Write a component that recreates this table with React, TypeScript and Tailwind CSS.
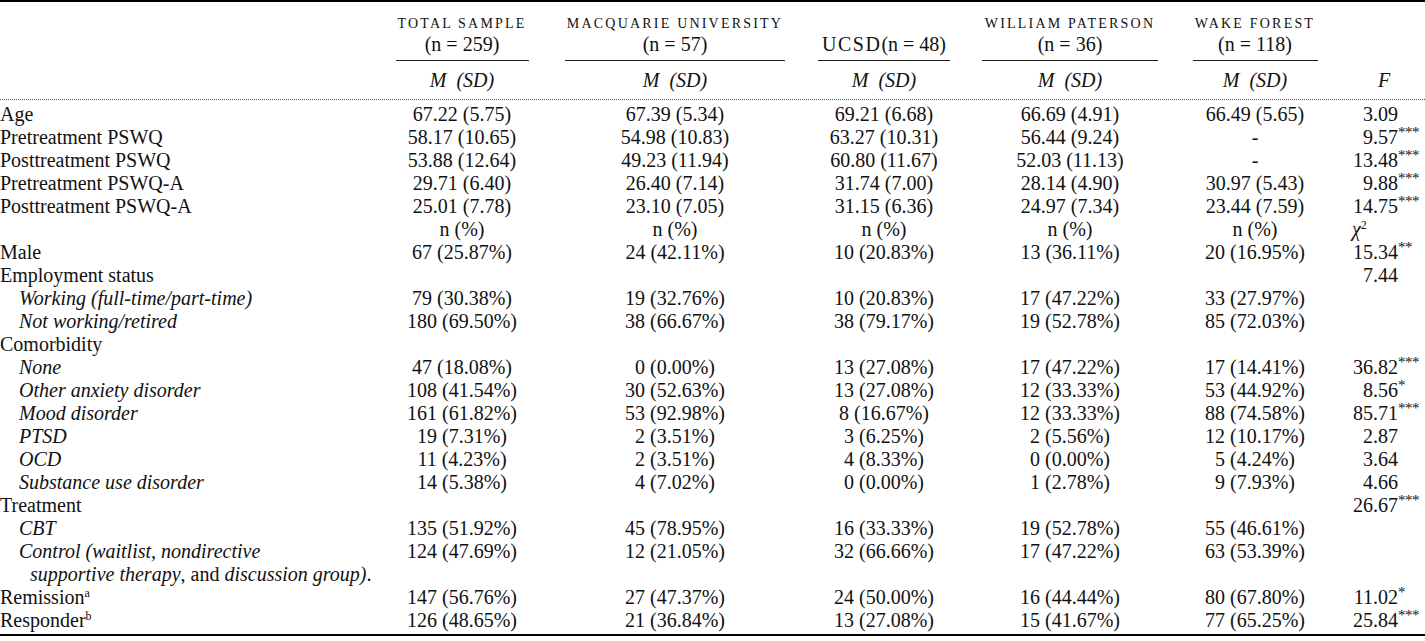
import React from 'react';

type Row = {
  label: React.ReactNode;
  indent?: 0 | 1 | 2;
  italic?: boolean;
  cells?: string[];
  f?: string;
  stars?: string;
  chi?: boolean;
};

const cols = 'grid grid-cols-[390px_144px_282px_136px_236px_134px_1fr]';

const rows: Row[] = [
  { label: 'Age', cells: ['67.22 (5.75)', '67.39 (5.34)', '69.21 (6.68)', '66.69 (4.91)', '66.49 (5.65)'], f: '3.09' },
  { label: 'Pretreatment PSWQ', cells: ['58.17 (10.65)', '54.98 (10.83)', '63.27 (10.31)', '56.44 (9.24)', '-'], f: '9.57', stars: '***' },
  { label: 'Posttreatment PSWQ', cells: ['53.88 (12.64)', '49.23 (11.94)', '60.80 (11.67)', '52.03 (11.13)', '-'], f: '13.48', stars: '***' },
  { label: 'Pretreatment PSWQ-A', cells: ['29.71 (6.40)', '26.40 (7.14)', '31.74 (7.00)', '28.14 (4.90)', '30.97 (5.43)'], f: '9.88', stars: '***' },
  { label: 'Posttreatment PSWQ-A', cells: ['25.01 (7.78)', '23.10 (7.05)', '31.15 (6.36)', '24.97 (7.34)', '23.44 (7.59)'], f: '14.75', stars: '***' },
  { label: '', cells: ['n (%)', 'n (%)', 'n (%)', 'n (%)', 'n (%)'], chi: true },
  { label: 'Male', cells: ['67 (25.87%)', '24 (42.11%)', '10 (20.83%)', '13 (36.11%)', '20 (16.95%)'], f: '15.34', stars: '**' },
  { label: 'Employment status', f: '7.44' },
  { label: 'Working (full-time/part-time)', indent: 1, italic: true, cells: ['79 (30.38%)', '19 (32.76%)', '10 (20.83%)', '17 (47.22%)', '33 (27.97%)'] },
  { label: 'Not working/retired', indent: 1, italic: true, cells: ['180 (69.50%)', '38 (66.67%)', '38 (79.17%)', '19 (52.78%)', '85 (72.03%)'] },
  { label: 'Comorbidity' },
  { label: 'None', indent: 1, italic: true, cells: ['47 (18.08%)', '0 (0.00%)', '13 (27.08%)', '17 (47.22%)', '17 (14.41%)'], f: '36.82', stars: '***' },
  { label: 'Other anxiety disorder', indent: 1, italic: true, cells: ['108 (41.54%)', '30 (52.63%)', '13 (27.08%)', '12 (33.33%)', '53 (44.92%)'], f: '8.56', stars: '*' },
  { label: 'Mood disorder', indent: 1, italic: true, cells: ['161 (61.82%)', '53 (92.98%)', '8 (16.67%)', '12 (33.33%)', '88 (74.58%)'], f: '85.71', stars: '***' },
  { label: 'PTSD', indent: 1, italic: true, cells: ['19 (7.31%)', '2 (3.51%)', '3 (6.25%)', '2 (5.56%)', '12 (10.17%)'], f: '2.87' },
  { label: 'OCD', indent: 1, italic: true, cells: ['11 (4.23%)', '2 (3.51%)', '4 (8.33%)', '0 (0.00%)', '5 (4.24%)'], f: '3.64' },
  { label: 'Substance use disorder', indent: 1, italic: true, cells: ['14 (5.38%)', '4 (7.02%)', '0 (0.00%)', '1 (2.78%)', '9 (7.93%)'], f: '4.66' },
  { label: 'Treatment', f: '26.67', stars: '***' },
  { label: 'CBT', indent: 1, italic: true, cells: ['135 (51.92%)', '45 (78.95%)', '16 (33.33%)', '19 (52.78%)', '55 (46.61%)'] },
  { label: 'Control (waitlist, nondirective', indent: 1, italic: true, cells: ['124 (47.69%)', '12 (21.05%)', '32 (66.66%)', '17 (47.22%)', '63 (53.39%)'] },
  {
    label: (
      <>
        <i>supportive therapy</i>, and <i>discussion group)</i>.
      </>
    ),
    indent: 2,
  },
  {
    label: (
      <>
        Remission<span className="relative -top-[7px] text-[12px] leading-none">a</span>
      </>
    ),
    cells: ['147 (56.76%)', '27 (47.37%)', '24 (50.00%)', '16 (44.44%)', '80 (67.80%)'],
    f: '11.02',
    stars: '*',
  },
  {
    label: (
      <>
        Responder<span className="relative -top-[7px] text-[12px] leading-none">b</span>
      </>
    ),
    cells: ['126 (48.65%)', '21 (36.84%)', '13 (27.08%)', '15 (41.67%)', '77 (65.25%)'],
    f: '25.84',
    stars: '***',
  },
];

const groups = [
  { title: 'total sample', n: '(n = 259)', w: 'w-[133px]' },
  { title: 'macquarie university', n: '(n = 57)', w: 'w-[220px]' },
  { title: '', n: 'UCSD', w: 'w-[132px]' },
  { title: 'william paterson', n: '(n = 36)', w: 'w-[176px]' },
  { title: 'wake forest', n: '(n = 118)', w: 'w-[125px]' },
];

function FCell({ row }: { row: Row }) {
  if (row.chi) {
    return (
      <div className="pl-[30px] whitespace-nowrap">
        <i>χ</i>
        <span className="relative -top-[7px] text-[12px] leading-none">2</span>
      </div>
    );
  }
  if (!row.f) return <div />;
  return (
    <div className="flex whitespace-nowrap">
      <span className="w-[76px] text-right">{row.f}</span>
      {row.stars && (
        <span className="relative -top-[5px] text-[15px] leading-none self-center tracking-[-0.5px]">{row.stars}</span>
      )}
    </div>
  );
}

export default function App() {
  return (
    <div className="w-[1425px] h-[641px] bg-white text-[#111] font-['Liberation_Serif',serif] text-[20px] overflow-hidden">
      <div className="border-t-2 border-black">
        {/* header */}
        <div className={cols + ' pt-[12px] border-b border-dotted border-[#555]'}>
          <div />
          {groups.map((g, i) => (
            <div key={i} className="flex justify-center">
              <div className={g.w + ' border-b border-[#222] pb-[6px] text-center'}>
                <div className="h-[20px] leading-[20px] text-[14px] uppercase tracking-[2.2px] whitespace-nowrap">{g.title}</div>
                <div className="h-[20px] leading-[20px] whitespace-nowrap">
                  {g.n === 'UCSD' ? (
                    <>
                      <span className="tracking-[1.5px]">UCSD</span>(n = 48)
                    </>
                  ) : (
                    g.n
                  )}
                </div>
              </div>
            </div>
          ))}
          <div />
          <div />
          {groups.map((_, i) => (
            <div key={i} className="text-center italic leading-[20px] py-[9px] whitespace-nowrap">
              M &nbsp;(SD)
            </div>
          ))}
          <div className="italic leading-[20px] py-[9px] pl-[56px]">F</div>
        </div>

        {/* body */}
        <div className="pt-[3px] pb-[2px] border-b-2 border-black">
          {rows.map((r, i) => (
            <div key={i} className={cols + ' leading-[23px] h-[23px]'}>
              <div
                className={
                  'whitespace-nowrap ' +
                  (r.indent === 1 ? 'pl-[19px] ' : r.indent === 2 ? 'pl-[30px] ' : '') +
                  (r.italic ? 'italic' : '')
                }
              >
                {r.label}
              </div>
              {[0, 1, 2, 3, 4].map((c) => (
                <div key={c} className="text-center whitespace-nowrap">
                  {r.cells ? r.cells[c] : ''}
                </div>
              ))}
              <FCell row={r} />
            </div>
          ))}
        </div>
      </div>
    </div>
  );
}
